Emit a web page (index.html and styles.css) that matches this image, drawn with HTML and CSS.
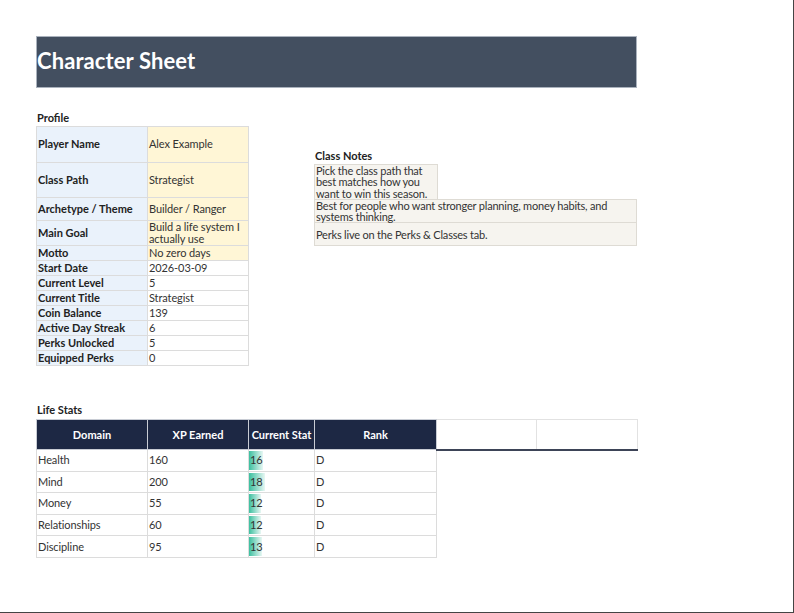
FILE: index.html
```html
<!DOCTYPE html>
<html>
<head>
<meta charset="utf-8">
<link rel="stylesheet" href="styles.css">
</head>
<body>
<div class="page">
  <div class="title-bar"><h1 class="title">Character Sheet</h1></div>

  <div class="top-row">
    <section class="profile">
      <div class="section-label">Profile</div>
      <table class="sheet profile-table">
        <colgroup><col class="c-label"><col class="c-value"></colgroup>
        <tr class="h36"><th>Player Name</th><td class="hl">Alex Example</td></tr>
        <tr class="h36"><th>Class Path</th><td class="hl">Strategist</td></tr>
        <tr class="h23"><th>Archetype / Theme</th><td class="hl">Builder / Ranger</td></tr>
        <tr class="h24"><th>Main Goal</th><td class="hl wrap">Build a life system I actually use</td></tr>
        <tr><th>Motto</th><td class="hl">No zero days</td></tr>
        <tr><th>Start Date</th><td>2026-03-09</td></tr>
        <tr><th>Current Level</th><td>5</td></tr>
        <tr><th>Current Title</th><td>Strategist</td></tr>
        <tr><th>Coin Balance</th><td>139</td></tr>
        <tr><th>Active Day Streak</th><td>6</td></tr>
        <tr><th>Perks Unlocked</th><td>5</td></tr>
        <tr><th>Equipped Perks</th><td>0</td></tr>
      </table>
    </section>

    <section class="notes">
      <div class="section-label">Class Notes</div>
      <div class="note note-narrow">Pick the class path that best matches how you want to win this season.</div>
      <div class="note note-wide">Best for people who want stronger planning, money habits, and systems thinking.</div>
      <div class="note note-wide note-last">Perks live on the Perks &amp; Classes tab.</div>
    </section>
  </div>

  <section class="stats">
    <div class="section-label">Life Stats</div>
    <table class="sheet stats-table">
      <colgroup>
        <col class="s1"><col class="s2"><col class="s3"><col class="s4"><col class="s5"><col class="s6">
      </colgroup>
      <tr class="head">
        <th class="dark">Domain</th><th class="dark">XP Earned</th><th class="dark">Current Stat</th><th class="dark">Rank</th><th class="blank"></th><th class="blank"></th>
      </tr>
      <tr><td>Health</td><td>160</td><td class="stat"><span class="bar" style="width:14px"></span><span class="num">16</span></td><td>D</td><td class="none"></td><td class="none"></td></tr>
      <tr><td>Mind</td><td>200</td><td class="stat"><span class="bar" style="width:16px"></span><span class="num">18</span></td><td>D</td><td class="none"></td><td class="none"></td></tr>
      <tr><td>Money</td><td>55</td><td class="stat"><span class="bar" style="width:12px"></span><span class="num">12</span></td><td>D</td><td class="none"></td><td class="none"></td></tr>
      <tr><td>Relationships</td><td>60</td><td class="stat"><span class="bar" style="width:12px"></span><span class="num">12</span></td><td>D</td><td class="none"></td><td class="none"></td></tr>
      <tr><td>Discipline</td><td>95</td><td class="stat"><span class="bar" style="width:13px"></span><span class="num">13</span></td><td>D</td><td class="none"></td><td class="none"></td></tr>
    </table>
  </section>
</div>
</body>
</html>
```

FILE: styles.css
```css
* { box-sizing: border-box; }
html, body { margin: 0; padding: 0; background: #fff; }
body {
  font-family: Lato, "Liberation Sans", sans-serif;
  font-size: 11px;
  color: #333;
}
.page {
  width: 794px;
  height: 613px;
  border-right: 1px solid #444;
  border-bottom: 1px solid #444;
  padding: 36px 0 0 36px;
  overflow: hidden;
}
.title-bar {
  width: 601px;
  height: 52px;
  background: #434f60;
  display: flex;
  align-items: center;
  border: 1px solid #aab2bd;
}
.title {
  margin: 0 0 4px 0;
  font-family: Lato, sans-serif;
  font-weight: 700;
  font-size: 22px;
  color: #fff;
  letter-spacing: 0.1px;
}
.top-row {
  display: flex;
  align-items: flex-start;
  gap: 65px;
  margin-top: 23px;
}
.section-label {
  font-weight: 700;
  font-size: 11px;
  color: #222;
  height: 15px;
  line-height: 13px;
  padding-left: 1px;
}
.sheet {
  border-collapse: collapse;
  table-layout: fixed;
}
.sheet th, .sheet td {
  border: 1px solid #dcdcdc;
  padding: 0 1px;
  height: 15px;
  line-height: 12px;
  font-size: 11px;
  text-align: left;
  vertical-align: middle;
  white-space: nowrap;
  overflow: hidden;
}
.sheet td { letter-spacing: -0.1px; }
.profile-table { width: 212px; }
.profile-table col.c-label { width: 111px; }
.profile-table col.c-value { width: 101px; }
.profile-table th {
  background: #eaf2fb;
  font-weight: 700;
  color: #222;
}
.profile-table td { color: #333; }
.profile-table td.hl { background: #fff6d6; }
.profile-table td.wrap { white-space: normal; }
.profile-table tr.h36 th, .profile-table tr.h36 td { height: 35.5px; }
.profile-table tr.h23 th, .profile-table tr.h23 td { height: 23px; }
.profile-table tr.h24 th, .profile-table tr.h24 td { height: 24px; }

.notes {
  width: 323px;
  margin-top: 38px;
}
.note {
  background: #f6f4ef;
  border: 1px solid #dedbd4;
  line-height: 11.3px;
  padding: 0 1px;
  color: #333;
  letter-spacing: -0.2px;
}
.note-narrow { width: 124px; height: 36px; }
.note-wide { width: 323px; height: 24px; margin-top: -1px; }
.note-last { padding-top: 6px; }

.stats { margin-top: 37px; }
.stats .section-label { height: 16px; }
.stats-table { width: 601px; }
.stats-table col.s1 { width: 111px; }
.stats-table col.s2 { width: 101px; }
.stats-table col.s3 { width: 66px; }
.stats-table col.s4 { width: 122px; }
.stats-table col.s5 { width: 100px; }
.stats-table col.s6 { width: 101px; }
.stats-table tr.head th {
  height: 30px;
  font-size: 11px;
}
.stats-table th.dark {
  background: #1d2844;
  color: #fff;
  font-weight: 700;
  text-align: center;
  border-color: #c8ccd4;
}
.stats-table th.blank {
  background: #fff;
  border: 1px solid #e2e2e2;
  border-bottom: 2px solid #3d4457;
}
.stats-table td { height: 21.6px; }
.stats-table td.none { border: none; }
.stats-table td.stat {
  position: relative;
  padding: 0;
}
.bar {
  position: absolute;
  left: 0; top: 1px; bottom: 1px;
  background: linear-gradient(to right, #3cbf9f, rgba(60,191,159,0.12));
}
.num {
  position: relative;
  padding-left: 1px;
  color: #333;
}
```
